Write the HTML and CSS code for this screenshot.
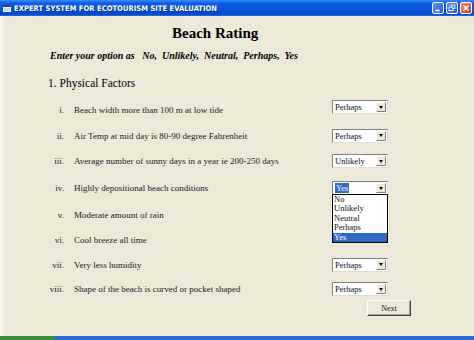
FILE: index.html
```html
<!DOCTYPE html>
<html>
<head>
<meta charset="utf-8">
<link rel="stylesheet" href="styles.css">
</head>
<body>
<div class="window">
  <div class="titlebar">
    <div class="title-left">
      <svg class="app-icon" width="8" height="7" viewBox="0 0 8 7"><rect x="0" y="0" width="8" height="7" fill="#fff"/><rect x="0" y="0" width="8" height="2" fill="#1a3f9e"/><rect x="1" y="3" width="6" height="3" fill="#c8d8f8"/></svg>
      <span class="title-text">EXPERT SYSTEM FOR ECOTOURISM SITE EVALUATION</span>
    </div>
    <div class="title-buttons">
      <div class="tbtn"><svg width="12" height="12" viewBox="0 0 12 12"><rect x="3" y="8" width="5" height="2" fill="#fff"/></svg></div>
      <div class="tbtn"><svg width="12" height="12" viewBox="0 0 12 12"><rect x="5" y="2.5" width="4.5" height="4" fill="none" stroke="#fff" stroke-width="1"/><rect x="2.5" y="5" width="4.5" height="4" fill="#2a5fe0" stroke="#fff" stroke-width="1"/></svg></div>
      <div class="tbtn close"><svg width="12" height="12" viewBox="0 0 12 12"><path d="M3 3 L9 9 M9 3 L3 9" stroke="#fff" stroke-width="1.6"/></svg></div>
    </div>
  </div>
  <div class="content">
    <h1 class="heading">Beach Rating</h1>
    <p class="instr">Enter your option as&nbsp;&nbsp;&nbsp;No,&nbsp; Unlikely,&nbsp; Neutral,&nbsp; Perhaps,&nbsp; Yes</p>
    <h2 class="section">1. Physical Factors</h2>
    <div class="rows">
      <div class="row h27"><span class="num">i.</span><span class="label">Beach width more than 100 m at low tide</span><div class="select up"><span class="val">Perhaps</span><span class="arrow"></span></div></div>
      <div class="row h25"><span class="num">ii.</span><span class="label">Air Temp at mid day is 80-90 degree Fahrenheit</span><div class="select"><span class="val">Perhaps</span><span class="arrow"></span></div></div>
      <div class="row h26"><span class="num">iii.</span><span class="label">Average number of sunny days in a year ie 200-250 days</span><div class="select"><span class="val">Unlikely</span><span class="arrow"></span></div></div>
      <div class="row h28"><span class="num">iv.</span><span class="label">Highly depositional beach conditions</span><div class="select open"><span class="val"><span class="sel">Yes</span></span><span class="arrow"></span>
        <ul class="list">
          <li>No</li><li>Unlikely</li><li>Neutral</li><li>Perhaps</li><li class="hl">Yes</li>
        </ul></div></div>
      <div class="row h26"><span class="num">v.</span><span class="label">Moderate amount of rain</span></div>
      <div class="row h24"><span class="num">vi.</span><span class="label">Cool breeze all time</span></div>
      <div class="row h25"><span class="num">vii.</span><span class="label">Very less humidity</span><div class="select"><span class="val">Perhaps</span><span class="arrow"></span></div></div>
      <div class="row h24"><span class="num">viii.</span><span class="label">Shape of the beach is curved or pocket shaped</span><div class="select"><span class="val">Perhaps</span><span class="arrow"></span></div></div>
    </div>
    <div class="actions"><button class="next">Next</button></div>
  </div>
  <div class="taskbar"><div class="start"></div><div class="bar"></div></div>
</div>
</body>
</html>
```
FILE: styles.css
```css
html, body { margin: 0; padding: 0; }
body { width: 474px; height: 340px; overflow: hidden; background: #ece9d8; font-family: "Liberation Serif", "Times New Roman", serif; }
.window { width: 474px; height: 340px; display: flex; flex-direction: column; }
.titlebar {
  height: 16px; flex: none; display: flex; align-items: center; justify-content: space-between;
  background: linear-gradient(to bottom, #3d8bf5 0%, #0a5ee6 20%, #0553dc 60%, #0449c9 90%, #2a6ee6 100%);
  padding: 0 2px 0 3px;
}
.title-left { display: flex; align-items: center; gap: 3px; }
.app-icon { display: block; }
.title-text { color: #fff; font-family: "DejaVu Sans Condensed", "DejaVu Sans", sans-serif; font-weight: bold; font-size: 7.6px; letter-spacing: 0; text-shadow: 1px 1px 0 #0a2a80; }
.title-buttons { display: flex; gap: 2px; }
.tbtn {
  width: 12px; height: 12px; border-radius: 2px; border: 1px solid #fff; box-sizing: border-box;
  background: linear-gradient(135deg, #5a93f8, #2a5fe0); display: flex; align-items: center; justify-content: center;
}
.tbtn svg { display: block; width: 10px; height: 10px; }
.tbtn.close { background: linear-gradient(135deg, #e88a6a, #c8421e); }
.content { flex: 1; position: relative; border-left: 3px solid #f5f3ea; }
.heading { margin: 0; padding: 9px 0 0 169px; height: 16px; line-height: 16px; text-align: left; font-size: 15px; font-weight: bold; color: #000; }
.instr { margin: 0; padding: 9px 0 0 47px; height: 12px; line-height: 12px; font-size: 10px; font-weight: bold; font-style: italic; color: #000; }
.section { margin: 0; padding: 14px 0 0 45px; height: 15px; line-height: 15px; font-size: 11.5px; font-weight: normal; color: #000; }
.rows { margin-top: 5px; display: flex; flex-direction: column; }
.row { display: flex; align-items: center; position: relative; }
.h24 { height: 24px; } .h25 { height: 25px; } .h26 { height: 26px; } .h27 { height: 27px; } .h28 { height: 28px; }
.num { width: 61px; text-align: right; font-size: 9px; color: #222; flex: none; }
.label { margin-left: 10px; width: 258px; font-size: 9px; color: #222; flex: none; white-space: nowrap; }
.select {
  position: relative; width: 56px; height: 14px; box-sizing: border-box; background: #fff;
  border-top: 1px solid #808080; border-left: 1px solid #808080; border-right: 1px solid #e0ded4; border-bottom: 1px solid #e0ded4;
  display: flex; align-items: center; justify-content: space-between;
}
.select.up { margin-top: -5px; }
.val { font-size: 8.5px; padding-left: 2px; color: #111; line-height: 10px; }
.sel { background: #316ac5; color: #fff; padding: 0 1px; }
.arrow {
  width: 10px; height: 10px; margin-right: 1px; background: #ece9d8; box-sizing: border-box;
  border-top: 1px solid #fff; border-left: 1px solid #fff; border-right: 1px solid #808080; border-bottom: 1px solid #808080;
  display: flex; align-items: center; justify-content: center;
}
.arrow::after { content: ""; width: 0; height: 0; border-left: 2.5px solid transparent; border-right: 2.5px solid transparent; border-top: 3px solid #000; }
.list {
  position: absolute; left: -1px; top: 12px; width: 56px; margin: 0; padding: 0; list-style: none;
  background: #fff; border: 1px solid #000; box-sizing: border-box; z-index: 5;
}
.list li { height: 9.4px; line-height: 9.4px; font-size: 8.5px; padding-left: 1px; color: #111; }
.list li.hl { background: #316ac5; color: #fff; }
.actions { display: flex; justify-content: flex-end; padding-right: 63px; margin-top: -1px; }
.next {
  width: 44px; height: 16px; font-family: "Liberation Serif", serif; font-size: 8px; color: #111; padding: 0;
  background: #ece9d8; border-top: 1px solid #fff; border-left: 1px solid #fff; border-right: 1px solid #404040; border-bottom: 1px solid #404040;
  box-shadow: inset -1px -1px 0 #a0a0a0;
}
.taskbar { height: 4px; flex: none; display: flex; }
.start { width: 55px; background: #3c8c3c; }
.bar { flex: 1; background: #2e6ad6; }
```
